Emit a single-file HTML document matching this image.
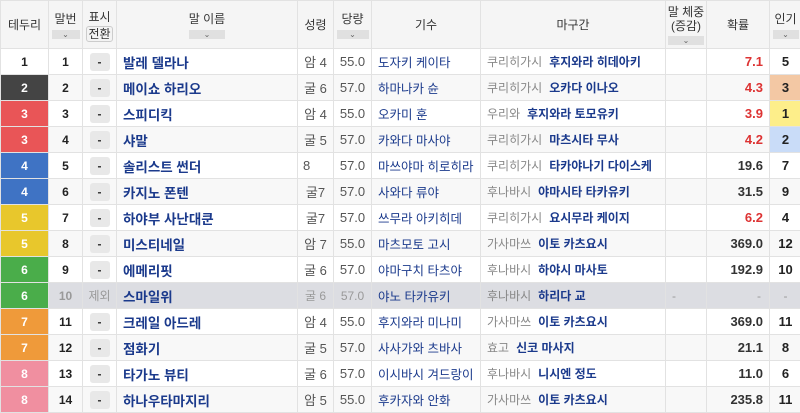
<!DOCTYPE html>
<html><head><meta charset="utf-8"><style>
body{margin:0;width:800px;height:413px;overflow:hidden;background:#fff;font-family:"Liberation Sans","Noto Sans CJK KR",sans-serif;}
table{border-collapse:collapse;table-layout:fixed;width:801px;font-size:12px;color:#333;}
td,th{border:1px solid #e2e2e2;padding:0;height:25px;white-space:nowrap;overflow:hidden;}
th{background:#f5f5f5;font-weight:normal;height:47px;font-size:12px;color:#333;position:relative;vertical-align:middle;}
.sb{display:block;margin:3px auto 0;height:9px;background:#e0e0e0;font-size:8px;line-height:9px;color:#666;}
tr:nth-child(odd) td{background:#f8f8f8}
td{text-align:center}
.f{font-weight:bold;color:#fff}
.b{font-weight:bold;color:#222}
.btn{display:inline-block;width:20px;height:18px;background:#e8e8e8;border-radius:3px;line-height:18px;font-weight:bold;}
.n{text-align:left;padding-left:6px;font-weight:bold;color:#1b3a8c;font-size:13.5px}
.j{text-align:left;padding-left:6px;color:#1b3a8c;font-size:12.5px}
.t{text-align:left;padding-left:6px;font-size:12px}
.t span{color:#888;margin-right:7px}
.t b{color:#1b3a8c}
.w{color:#555;font-size:13px}
.p{text-align:right;padding-right:6px;font-weight:bold;color:#333;font-size:13px}
.r{color:#d33}
.pop{font-weight:bold;font-size:13px;color:#222}
tr.x td{background:#dcdde2 !important;color:#999}
tr.x td.n,tr.x td.j{color:#1b3a8c}
</style></head><body>
<table>
<colgroup><col style="width:48px"><col style="width:34px"><col style="width:34px"><col style="width:181px"><col style="width:36px"><col style="width:38px"><col style="width:109px"><col style="width:185px"><col style="width:41px"><col style="width:63px"><col style="width:32px"></colgroup>
<tr><th>테두리</th><th>말번<span class="sb" style="width:28px">⌄</span></th><th>표시<br><span style="border:1px solid #ccc;border-radius:3px;padding:0 1px;background:#f3f3f3">전환</span></th><th>말 이름<span class="sb" style="width:36px">⌄</span></th><th>성령</th><th>당량<span class="sb" style="width:32px">⌄</span></th><th>기수</th><th>마구간</th><th style="line-height:14px">말 체중<br>(증감)<span class="sb" style="width:36px">⌄</span></th><th>확률</th><th>인기<span class="sb" style="width:26px">⌄</span></th></tr>
<tr><td class="b" style="background:#fff">1</td><td class="b">1</td><td><span class="btn">-</span></td><td class="n">발레 델라나</td><td class="w">암 4</td><td class="w">55.0</td><td class="j">도자키 케이타</td><td class="t"><span>쿠리히가시</span><b>후지와라 히데아키</b></td><td></td><td class="p r">7.1</td><td class="pop">5</td></tr>
<tr><td class="f" style="background:#444">2</td><td class="b">2</td><td><span class="btn">-</span></td><td class="n">메이쇼 하리오</td><td class="w">굴 6</td><td class="w">57.0</td><td class="j">하마나카 슌</td><td class="t"><span>쿠리히가시</span><b>오카다 이나오</b></td><td></td><td class="p r">4.3</td><td class="pop" style="background:#f3c8a4">3</td></tr>
<tr><td class="f" style="background:#e95557">3</td><td class="b">3</td><td><span class="btn">-</span></td><td class="n">스피디킥</td><td class="w">암 4</td><td class="w">55.0</td><td class="j">오카미 훈</td><td class="t"><span>우리와</span><b>후지와라 토모유키</b></td><td></td><td class="p r">3.9</td><td class="pop" style="background:#fdee8a">1</td></tr>
<tr><td class="f" style="background:#e95557">3</td><td class="b">4</td><td><span class="btn">-</span></td><td class="n">샤말</td><td class="w">굴 5</td><td class="w">57.0</td><td class="j">카와다 마사야</td><td class="t"><span>쿠리히가시</span><b>마츠시타 무사</b></td><td></td><td class="p r">4.2</td><td class="pop" style="background:#c9dcf8">2</td></tr>
<tr><td class="f" style="background:#3f73c4">4</td><td class="b">5</td><td><span class="btn">-</span></td><td class="n">솔리스트 썬더</td><td class="w" style="text-align:left;padding-left:5px">8</td><td class="w">57.0</td><td class="j">마쓰야마 히로히라</td><td class="t"><span>쿠리히가시</span><b>타카야나기 다이스케</b></td><td></td><td class="p">19.6</td><td class="pop">7</td></tr>
<tr><td class="f" style="background:#3f73c4">4</td><td class="b">6</td><td><span class="btn">-</span></td><td class="n">카지노 폰텐</td><td class="w">굴7</td><td class="w">57.0</td><td class="j">사와다 류야</td><td class="t"><span>후나바시</span><b>야마시타 타카유키</b></td><td></td><td class="p">31.5</td><td class="pop">9</td></tr>
<tr><td class="f" style="background:#e8c72c">5</td><td class="b">7</td><td><span class="btn">-</span></td><td class="n">하야부 사난대쿤</td><td class="w">굴7</td><td class="w">57.0</td><td class="j">쓰무라 아키히데</td><td class="t"><span>쿠리히가시</span><b>요시무라 케이지</b></td><td></td><td class="p r">6.2</td><td class="pop">4</td></tr>
<tr><td class="f" style="background:#e8c72c">5</td><td class="b">8</td><td><span class="btn">-</span></td><td class="n">미스티네일</td><td class="w">암 7</td><td class="w">55.0</td><td class="j">마츠모토 고시</td><td class="t"><span>가사마쓰</span><b>이토 카츠요시</b></td><td></td><td class="p">369.0</td><td class="pop">12</td></tr>
<tr><td class="f" style="background:#4aad4a">6</td><td class="b">9</td><td><span class="btn">-</span></td><td class="n">에메리핏</td><td class="w">굴 6</td><td class="w">57.0</td><td class="j">야마구치 타츠야</td><td class="t"><span>후나바시</span><b>하야시 마사토</b></td><td></td><td class="p">192.9</td><td class="pop">10</td></tr>
<tr class="x"><td class="f" style="background:#4aad4a !important;color:#fff">6</td><td style="font-weight:bold">10</td><td>제외</td><td class="n">스마일위</td><td>굴 6</td><td>57.0</td><td class="j">야노 타카유키</td><td class="t"><span>후나바시</span><b>하리다 교</b></td><td style="text-align:left;padding-left:6px">-</td><td style="text-align:right;padding-right:8px">-</td><td>-</td></tr>
<tr><td class="f" style="background:#ef9a3a">7</td><td class="b">11</td><td><span class="btn">-</span></td><td class="n">크레일 아드레</td><td class="w">암 4</td><td class="w">55.0</td><td class="j">후지와라 미나미</td><td class="t"><span>가사마쓰</span><b>이토 카츠요시</b></td><td></td><td class="p">369.0</td><td class="pop">11</td></tr>
<tr><td class="f" style="background:#ef9a3a">7</td><td class="b">12</td><td><span class="btn">-</span></td><td class="n">점화기</td><td class="w">굴 5</td><td class="w">57.0</td><td class="j">사사가와 츠바사</td><td class="t"><span>효고</span><b>신코 마사지</b></td><td></td><td class="p">21.1</td><td class="pop">8</td></tr>
<tr><td class="f" style="background:#f08fa0">8</td><td class="b">13</td><td><span class="btn">-</span></td><td class="n">타가노 뷰티</td><td class="w">굴 6</td><td class="w">57.0</td><td class="j">이시바시 겨드랑이</td><td class="t"><span>후나바시</span><b>니시엔 정도</b></td><td></td><td class="p">11.0</td><td class="pop">6</td></tr>
<tr><td class="f" style="background:#f08fa0">8</td><td class="b">14</td><td><span class="btn">-</span></td><td class="n">하나우타마지리</td><td class="w">암 5</td><td class="w">55.0</td><td class="j">후카자와 안화</td><td class="t"><span>가사마쓰</span><b>이토 카츠요시</b></td><td></td><td class="p">235.8</td><td class="pop">11</td></tr>
</table>
</body></html>
